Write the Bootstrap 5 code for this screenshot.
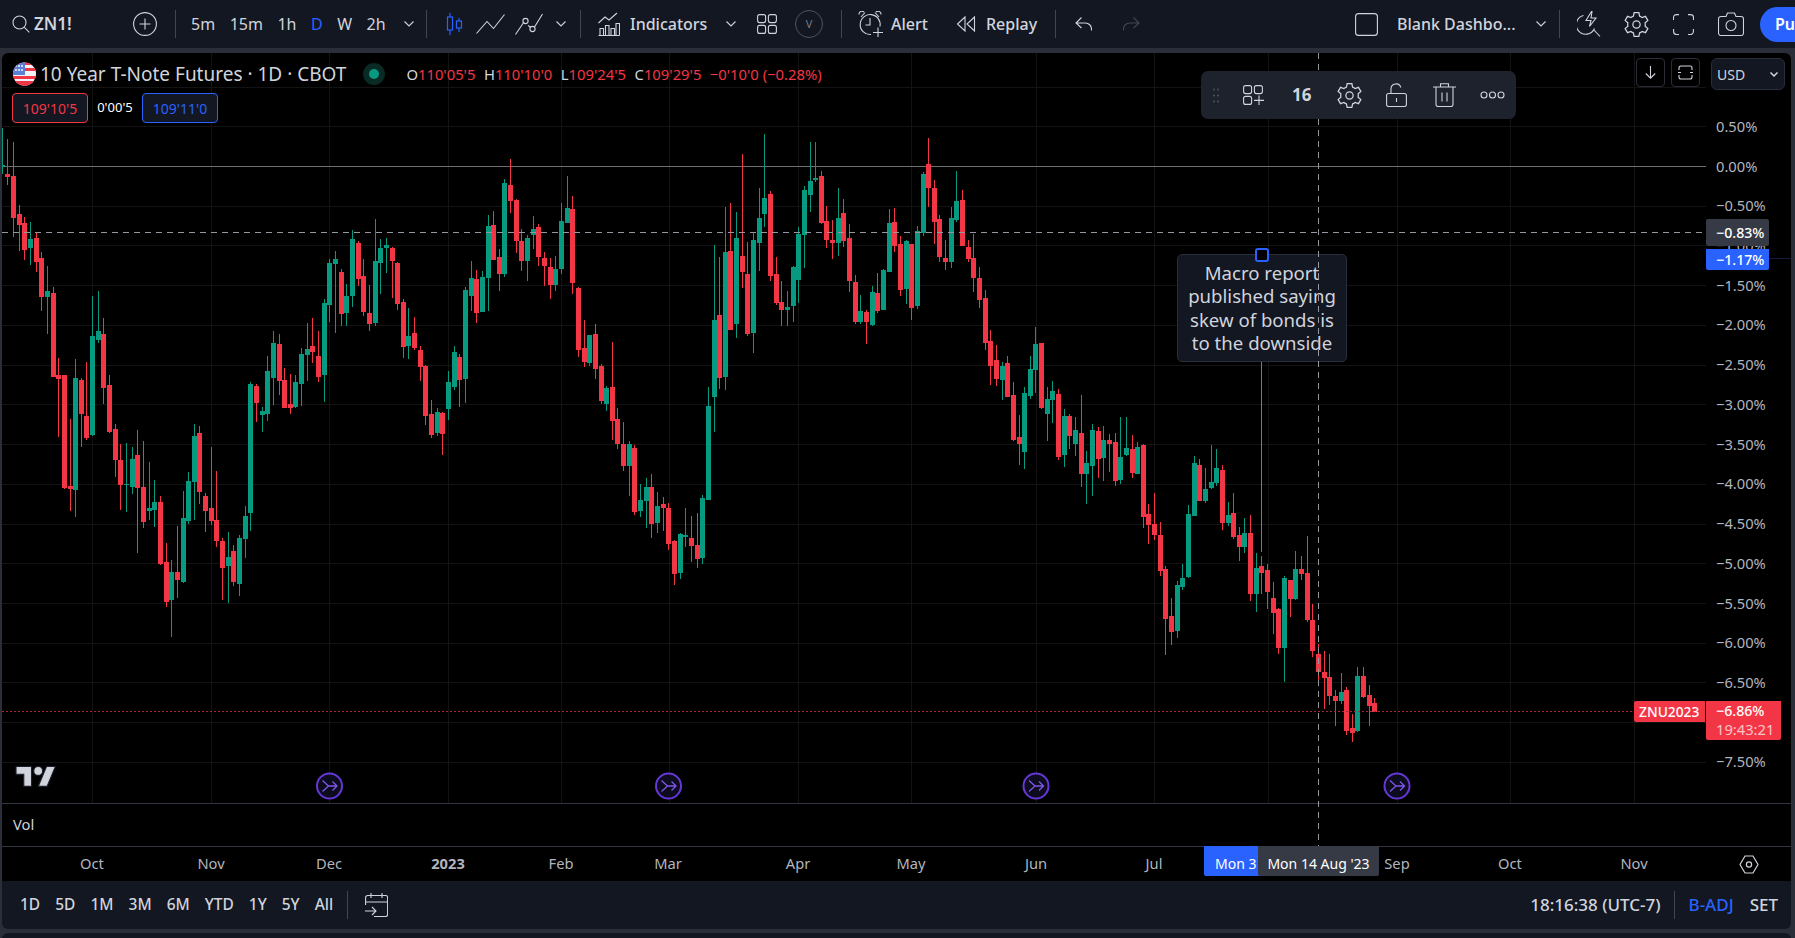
<!DOCTYPE html>
<html lang="en"><head><meta charset="utf-8"><title>ZN1! chart</title>
<link href="https://cdn.jsdelivr.net/npm/bootstrap@5.3.0/dist/css/bootstrap.min.css" rel="stylesheet">
<style>
html,body{height:100%;}
body{background:#2a2e39;color:#d1d4dc;font-family:"Noto Sans","Open Sans",sans-serif;overflow:hidden;width:1795px;height:938px;font-size:16px;}
svg{display:block;flex:none;}
.topstrip{height:48px;background:#131722;white-space:nowrap;}
.ic{fill:none;stroke:#d1d4dc;stroke-width:1.1;}
.grp-search{width:133px;padding-left:12px;font-weight:600;font-size:17px;}
.grp-tf{width:223px;}
.tf-gap{gap:14.500px;}
.vsep{width:1px;height:28px;background:#434651;flex:none;}
.acc{color:#2962ff;}
.t76{width:76px}.t38{width:38px}.t51{width:51px}.t116{width:116px}
.ml-8{margin-left:8px}.ml-10{margin-left:10px}.ml-12{margin-left:12px}.ml-13{margin-left:13px}.ml-14{margin-left:14px}.ml-15{margin-left:15px}.ml-16{margin-left:16px}.ml-17{margin-left:17px}.ml-18{margin-left:18px}.ml-19{margin-left:19px}.ml-20{margin-left:20px}.ml-21{margin-left:21px}.ml-23{margin-left:23px}.ml-24{margin-left:24px}.ml-25{margin-left:25px}.ml-26{margin-left:26px}.ml-27{margin-left:27px}.ml-28{margin-left:28px}.ml-31{margin-left:31px}
.publish{width:86px;height:35px;margin-right:-51px;background:#2962ff;color:#fff;border:0;border-radius:18px 0 0 18px;font-weight:600;padding:0 0 0 15px;text-align:left;font-size:16px;}
.chartpanel{margin:5px 4px 0 2px;height:828px;background:#000;border-radius:6px 6px 0 0;overflow:hidden;position:relative;}
.layer{position:absolute;left:0;top:0;}
.legend-title{font-size:19px;}
.legend-row{position:absolute;left:11px;top:9px;height:24px;}
.pulse{width:22px;height:22px;border-radius:50%;background:#0a2a25;margin-left:17px;margin-right:21px;}
.pulse i{display:block;width:10px;height:10px;border-radius:50%;background:#089981;}
.ohlc{font-size:14.800px;color:#f23645;gap:8.500px;}
.ohlc b{font-weight:400;color:#d1d4dc;}
.bidask{position:absolute;left:10px;top:40px;font-size:14px;}
.pbox{width:76px;height:30px;border:1px solid;border-radius:4px;background:#131722;}
.pbox-sell{color:#f23645;border-color:#f23645;}
.pbox-buy{color:#2962ff;border-color:#2962ff;}
.spread{width:54px;font-size:13px;color:#fff;}
.floatbar{position:absolute;left:1199px;top:18px;width:315px;height:48px;background:#1e222d;border-radius:7px;padding-left:12px;font-weight:700;font-size:17px;}
.axisbtn{position:absolute;top:5px;height:29px;width:29px;border:1px solid #2a2e39;border-radius:4px;padding:0;background:transparent;}
.btnpos1{left:1634px}.btnpos2{left:1669px}
.usd{position:absolute;top:5px;left:1709px;width:74px;height:32px;background:#131722;border:1px solid #2a2e39;border-radius:6px;font-size:14px;color:#d1d4dc;padding:0 6px 0 5px;}
.note{position:absolute;left:1175px;top:201px;width:170px;height:108px;background:#131722;border:1px solid #2a2e39;border-radius:5px;font-size:18.600px;line-height:23.600px;text-align:center;padding-top:5.500px;color:#d1d4dc;white-space:nowrap;}
.knob{position:absolute;left:1253px;top:195px;width:14px;height:14px;border:2px solid #2962ff;border-radius:3px;background:#000;}
.ptag{position:absolute;font-size:14.200px;padding-left:10px;font-weight:500;}
.tag-cross{left:1704px;top:166px;width:63px;height:27px;background:#363a45;color:#fff;border-radius:2px;line-height:27px;}
.tag-blue{left:1704px;top:196px;width:63px;height:21px;line-height:21px;background:#2962ff;color:#fff;border-radius:0 0 2px 2px;}
.tag-sym{left:1632px;top:648px;width:71px;height:21px;line-height:21px;background:#f23645;color:#fff;border-radius:2px 0 0 2px;padding-left:5px;font-size:13.800px;}
.tag-last{left:1704px;top:648px;width:75px;height:39px;background:#f23645;color:#fff;border-radius:0 0 2px 2px;line-height:18px;padding-top:1px;}
.tag-last span{opacity:.7;display:block;font-weight:400;font-size:14.700px;}
.tlabel{position:absolute;top:793px;height:30px;line-height:35px;font-size:14px;border-radius:0 0 2px 2px;color:#fff;white-space:nowrap;overflow:hidden;}
.tl-blue{left:1202px;width:58px;background:#2962ff;padding-left:11px;}
.tl-gray{left:1256px;width:121px;background:#363a45;text-align:center;}
.vollabel{position:absolute;left:11px;top:760px;font-size:14.700px;color:#d1d4dc;}
.rangebar{height:48px;margin:0 4px 0 2px;background:#131722;border-radius:0 0 6px 6px;}
.rng{width:345px;padding-left:18px;gap:15px;font-size:15.500px;font-weight:500;}
.clock{font-size:17px;padding-right:13px;}
.stubpanel{height:20px;margin:4px 4px 0 2px;background:#131722;border-radius:6px 6px 0 0;}
.axt{font-size:14.700px;fill:#b2b5be;font-family:"Noto Sans",sans-serif;}
.axt-b{font-weight:700;fill:#b2b5be;}
</style></head><body>

<div class="topstrip d-flex align-items-center">
  <div class="grp-search d-flex align-items-center gap-1"><svg width="18" height="18" viewBox="0 0 18 18" class="ic"><circle cx="7.5" cy="7.5" r="6.5"/><path d="M12.3 12.3l5 5"/></svg><span>ZN1!</span></div>
  <svg width="24" height="24" viewBox="0 0 24 24" class="ic"><circle cx="12" cy="12" r="11.4"/><path d="M12 6.5v11M6.5 12h11"/></svg>
  <div class="vsep ml-18"></div>
  <div class="grp-tf ml-15 d-flex align-items-center tf-gap"><span>5m</span><span>15m</span><span>1h</span><span class="acc">D</span><span>W</span><span>2h</span>
    <svg class="ic ms-auto" width="10" height="6" viewBox="0 0 10 6"><path d="M.5.5L5 5 9.5.5"/></svg></div>
  <div class="vsep ml-12"></div>
  <svg class="ml-19" width="17" height="24" viewBox="0 0 17 24" fill="none" stroke="#2962ff" stroke-width="1.2"><path d="M4 1v22M13 6v14"/><rect x="1.5" y="5" width="5" height="13" fill="#131722"/><rect x="10.5" y="9" width="5" height="7" fill="#131722"/></svg>
  <svg class="ic ml-13" width="29" height="20" viewBox="0 0 29 20"><path d="M.5 19.5L11 7.5l6.5 7L28.5.5"/></svg>
  <svg class="ic ml-10" width="28" height="22" viewBox="0 0 28 22"><path d="M.5 21.5L9 9M13 12.5l3 2M19.5 14L27.5 1"/><circle cx="10.5" cy="8" r="2.6"/><circle cx="17.5" cy="16" r="2.6"/></svg>
  <svg class="ic ml-13" width="10" height="6" viewBox="0 0 10 6"><path d="M.5.5L5 5 9.5.5"/></svg>
  <div class="vsep ml-14"></div>
  <svg class="ic ml-17" width="22" height="24" viewBox="0 0 22 24"><path d="M.5 11L7 5l4 3 8-7"/><path d="M.5 23.5h21M2 23.5v-7h3.5v7M7.5 23.5v-10H11v10M13 23.5v-7h3.5v7M18 23.5v-12h3.5v12"/></svg>
  <span class="ml-10 t76 fw-medium">Indicators</span>
  <svg class="ic ml-20" width="10" height="6" viewBox="0 0 10 6"><path d="M.5.5L5 5 9.5.5"/></svg>
  <svg class="ic ml-21" width="20" height="20" viewBox="0 0 20 20"><rect x=".6" y=".6" width="8" height="8" rx="2"/><rect x="11.4" y=".6" width="8" height="8" rx="2"/><rect x=".6" y="11.4" width="8" height="8" rx="2"/><rect x="11.4" y="11.4" width="8" height="8" rx="2"/></svg>
  <svg class="ml-18" width="28" height="28" viewBox="0 0 28 28"><circle cx="14" cy="14" r="13.5" fill="none" stroke="#50535e"/><text x="14" y="18" text-anchor="middle" font-size="11" fill="#787b86">V</text></svg>
  <div class="vsep ml-18"></div>
  <svg class="ic ml-16" width="25" height="26" viewBox="0 0 25 26"><path d="M13 23.5a10 10 0 1 1 9-8"/><path d="M12 7v7H7.5M3 6l4-4.5M1 3.5a3 3 0 0 1 5-2.5M21 6l-4-4.5M23 3.5a3 3 0 0 0-5-2.5M15 21.5h10M20 16.5v9.5"/></svg>
  <span class="ml-8 t38 fw-medium">Alert</span>
  <svg class="ic ml-27" width="20" height="16" viewBox="0 0 20 16"><path d="M9 1L1.5 8 9 15zM18.5 1L11 8l7.5 7z"/></svg>
  <span class="ml-10 t51 fw-medium">Replay</span>
  <div class="vsep ml-18"></div>
  <svg class="ic ml-19" width="17" height="14" viewBox="0 0 17 14"><path d="M6.5.5L1 6l5.5 5M1 6h9.5a6 6 0 0 1 6 6v1.5"/></svg>
  <svg class="ml-31" width="17" height="14" viewBox="0 0 17 14" fill="none" stroke="#434651" stroke-width="1.1"><path d="M10.5.5L16 6l-5.5 5M16 6H6.5a6 6 0 0 0-6 6v1.5"/></svg>
  <div class="ms-auto d-flex align-items-center">
    <svg class="ic" width="23" height="23" viewBox="0 0 23 23"><rect x=".6" y=".6" width="21.8" height="21.8" rx="3"/></svg>
    <span class="ml-19 t116 fw-medium text-nowrap">Blank Dashbo...</span>
    <svg class="ic ml-23" width="10" height="6" viewBox="0 0 10 6"><path d="M.5.5L5 5 9.5.5"/></svg>
    <div class="vsep ml-13"></div>
    <svg class="ic ml-17" width="24" height="26" viewBox="0 0 24 26"><path d="M6.5 4.5a9.5 9.5 0 1 0 11 13M17 19l6 6.5"/><path d="M14.5.5L9 9.5h5l-1.500 6L19 7h-5l1-6.500z"/></svg>
    <svg class="ic ml-23" width="25" height="25" viewBox="3 3 22 22"><path d="M16.090 3.500h-4.180l-.6 3.100a7.900 7.900 0 0 0-2.200 1.270L6.100 6.830 4 10.450l2.400 2.080a8 8 0 0 0 0 2.940L4 17.550l2.100 3.620 3-1.040a7.900 7.900 0 0 0 2.200 1.270l.6 3.100h4.190l.6-3.100a7.900 7.900 0 0 0 2.200-1.270l3 1.040 2.100-3.620-2.400-2.080a8 8 0 0 0 0-2.940l2.400-2.080-2.100-3.620-3 1.040a7.900 7.900 0 0 0-2.200-1.270z"/><circle cx="14" cy="14" r="3.200"/></svg>
    <svg class="ic ml-24" width="21" height="21" viewBox="0 0 21 21"><path d="M6 .6H3.500a3 3 0 0 0-3 3V6M15 .6h2.500a3 3 0 0 1 3 3V6M.6 15v2.500a3 3 0 0 0 3 3H6M20.400 15v2.500a3 3 0 0 1-3 3H15"/></svg>
    <svg class="ic ml-24" width="26" height="24" viewBox="0 0 26 24"><path d="M8 4.500l1.500-3.500h7L18 4.500h5a2.500 2.500 0 0 1 2.500 2.500v14a2.500 2.500 0 0 1-2.500 2.500H3A2.500 2.500 0 0 1 .5 21V7A2.500 2.500 0 0 1 3 4.500z"/><circle cx="13" cy="13.500" r="5"/></svg>
    <button type="button" class="btn publish ml-16">Publish</button>
  </div>
</div>

<div class="chartpanel">
  <svg id="cv" class="layer" width="1789" height="828" viewBox="2 53 1789 828" shape-rendering="crispEdges"></svg>
  <div class="note">Macro report<br>published saying<br>skew of bonds is<br>to the downside</div>
  <svg id="ch" class="layer" width="1789" height="828" viewBox="2 53 1789 828" shape-rendering="crispEdges"></svg>
  <div class="knob"></div>

  <div class="legend-row d-flex align-items-center">
    <svg width="23" height="24" viewBox="0 0 23 24"><defs><clipPath id="fl"><circle cx="11.500" cy="12" r="11.500"/></clipPath></defs><g clip-path="url(#fl)"><rect width="23" height="24" fill="#f0f3fa"/><rect y="0" width="23" height="3" fill="#f23645"/><rect y="6" width="23" height="3" fill="#f23645"/><rect y="14" width="23" height="3" fill="#f23645"/><rect y="19" width="23" height="5" fill="#f23645"/><rect width="12" height="13" fill="#5b7fd6"/><g fill="#fff"><circle cx="3" cy="4" r=".9"/><circle cx="6" cy="4" r=".9"/><circle cx="9" cy="4" r=".9"/><circle cx="3" cy="8" r=".9"/><circle cx="6" cy="8" r=".9"/><circle cx="9" cy="8" r=".9"/></g></g></svg>
    <span class="legend-title ms-1 text-nowrap">10 Year T-Note Futures · 1D · CBOT</span>
    <div class="pulse d-flex align-items-center justify-content-center"><i></i></div>
    <div class="ohlc d-flex text-nowrap"><span><b>O</b>110'05'5</span><span><b>H</b>110'10'0</span><span><b>L</b>109'24'5</span><span><b>C</b>109'29'5</span><span>−0'10'0 (−0.28%)</span></div>
  </div>
  <div class="bidask d-flex align-items-center">
    <div class="pbox pbox-sell d-flex align-items-center justify-content-center">109'10'5</div>
    <div class="spread text-center">0'00'5</div>
    <div class="pbox pbox-buy d-flex align-items-center justify-content-center">109'11'0</div>
  </div>

  <div class="floatbar d-flex align-items-center">
    <svg width="6" height="15" viewBox="0 0 6 15" fill="#50535e"><circle cx="1" cy="1.500" r="1"/><circle cx="5" cy="1.500" r="1"/><circle cx="1" cy="7.500" r="1"/><circle cx="5" cy="7.500" r="1"/><circle cx="1" cy="13.500" r="1"/><circle cx="5" cy="13.500" r="1"/></svg>
    <svg class="ic ml-24" width="21" height="20" viewBox="0 0 21 20"><rect x=".6" y=".6" width="8" height="8" rx="2"/><rect x="11.400" y=".6" width="8" height="8" rx="2"/><rect x=".6" y="11.400" width="8" height="8" rx="2"/><path d="M11 15.400h10M16 10.400v9.500"/></svg>
    <span class="ml-28">16</span>
    <svg class="ic ml-26" width="25" height="25" viewBox="3 3 22 22"><path d="M16.090 3.500h-4.180l-.6 3.100a7.900 7.900 0 0 0-2.200 1.270L6.100 6.830 4 10.450l2.400 2.080a8 8 0 0 0 0 2.940L4 17.550l2.100 3.620 3-1.040a7.900 7.900 0 0 0 2.200 1.270l.6 3.100h4.190l.6-3.100a7.900 7.900 0 0 0 2.200-1.270l3 1.040 2.100-3.620-2.400-2.080a8 8 0 0 0 0-2.940l2.400-2.080-2.100-3.620-3 1.040a7.900 7.900 0 0 0-2.200-1.270z"/><circle cx="14" cy="14" r="3.200"/></svg>
    <svg class="ic ml-24" width="21" height="24" viewBox="0 0 21 24"><rect x=".6" y="10.500" width="19.800" height="13" rx="2"/><path d="M5 10.500V6a5 5 0 0 1 9.800-1.500M10.500 15v4"/></svg>
    <svg class="ic ml-26" width="23" height="24" viewBox="0 0 23 24"><path d="M0 4h23M7.500 4V.8h8V4M3 4v17.500a2 2 0 0 0 2 2h13a2 2 0 0 0 2-2V4M9 9.500v9M14 9.500v9"/></svg>
    <svg class="ic ml-24" width="25" height="8" viewBox="0 0 25 8"><circle cx="4" cy="4" r="3"/><circle cx="12.500" cy="4" r="3"/><circle cx="21" cy="4" r="3"/></svg>
  </div>

  <button type="button" class="axisbtn d-flex align-items-center justify-content-center btnpos1"><svg class="ic" width="11" height="13" viewBox="0 0 11 13"><path d="M5.500 0v12M.8 7.500l4.700 4.700 4.700-4.700"/></svg></button>
  <button type="button" class="axisbtn d-flex align-items-center justify-content-center btnpos2"><svg class="ic" width="15" height="15" viewBox="0 0 15 15"><path d="M1 5V3a2 2 0 0 1 2-2h9a2 2 0 0 1 2 2v2M1 10v2a2 2 0 0 0 2 2h9a2 2 0 0 0 2-2v-2M0 7.500h3M12 7.500h3"/></svg></button>
  <div class="usd d-flex align-items-center justify-content-between"><span>USD</span><svg width="8" height="5" viewBox="0 0 8 5" fill="none" stroke="#d1d4dc" stroke-width="1.500"><path d="M.5.5L4 4 7.500.5"/></svg></div>

  <div class="ptag tag-cross">−0.83%</div>
  <div class="ptag tag-blue">−1.17%</div>
  <div class="ptag tag-sym">ZNU2023</div>
  <div class="ptag tag-last">−6.86%<span>19:43:21</span></div>

  <div class="vollabel">Vol</div>
  <div class="tlabel tl-blue">Mon 31</div>
  <div class="tlabel tl-gray">Mon 14 Aug '23</div>
</div>

<div class="rangebar d-flex align-items-center">
  <div class="rng d-flex align-items-center"><span>1D</span><span>5D</span><span>1M</span><span>3M</span><span>6M</span><span>YTD</span><span>1Y</span><span>5Y</span><span>All</span></div>
  <div class="vsep"></div>
  <svg class="ic ml-17" width="23" height="24" viewBox="0 0 23 24"><path d="M.6 12V4.500a2 2 0 0 1 2-2h18a2 2 0 0 1 2 2v17a2 2 0 0 1-2 2H9M.6 9h22M6 0v5M17 0v5M0 18h11M7 14l4 4-4 4"/></svg>
  <div class="ms-auto d-flex align-items-center clock">
    <span class="fw-medium">18:16:38 (UTC-7)</span>
    <div class="vsep ml-13"></div>
    <span class="acc ml-14 fw-medium">B-ADJ</span>
    <span class="ml-16 fw-medium">SET</span>
  </div>
</div>
<div class="stubpanel"></div>

<script>
var NS='http://www.w3.org/2000/svg',cv=document.getElementById('cv'),ch=document.getElementById('ch');
function el(p,n,a,t){var e=document.createElementNS(NS,n);for(var k in a)e.setAttribute(k,a[k]);if(t)e.textContent=t;p.appendChild(e);return e;}
function line(p,x1,y1,x2,y2,c,d){var a={x1:x1,y1:y1,x2:x2,y2:y2,stroke:c};if(d)a['stroke-dasharray']=d;return el(p,'line',a);}
var GRID='#131313',SEP='#33363f';
[92,211,329,448,561,669,798,911,1036,1154,1268,1397,1510,1634].forEach(function(x){line(cv,x+.5,53,x+.5,803,GRID);});
for(var i=-2;i<=15;i++){var y=Math.round(166+i*39.73)+.5;line(cv,2,y,1706,y,GRID);}
line(cv,2,166.5,1706,166.5,'#6f6f6f');
line(cv,1261.5,362,1261.5,552,'#787b86');
var sets=[
{ox:0,oy:120,sy:2.958,d:"7,24,133,138,160,g;22,57,160,169,192,r;40,66,166,290,345,r;58,252,278,311,387,r;73,288,305,385,413,r;91,303,352,379,429,g;109,333,349,420,450,r;124,389,408,524,565,r;142,432,506,524,633,g;160,494,512,760,760,r;175,704,754,766,938,r;193,754,754,1089,1092,r;211,885,1083,1092,1157,r;226,707,763,1095,1175,g;244,763,769,870,967,r;259,716,876,941,947,r;277,521,639,932,935,g;295,506,624,651,660,g;310,586,633,793,840,r;328,754,784,923,926,r;346,899,914,1006,1056,r;361,959,1006,1080,1154,r;379,956,1077,1080,1160,g;397,967,1003,1086,1106,g;412,917,991,1089,1281,r;430,950,1086,1189,1207,r;448,1012,1148,1157,1183,g;463,1065,1130,1154,1204,g;481,1112,1130,1314,1317,r;499,1251,1308,1426,1441,r;514,1302,1337,1420,1530,g;532,1201,1337,1361,1414,r;550,1098,1177,1367,1370,g;565,1041,1068,1186,1195,g;583,899,935,1071,1183,g;598,905,926,1101,1136,r;616,1104,1112,1157,1219,r;634,967,1148,1186,1198,r;649,1038,1183,1246,1263,r;667,1237,1246,1325,1420,r;685,1219,1293,1319,1429,g;700,1257,1275,1367,1379,r;718,1228,1237,1373,1408,g;736,1142,1172,1240,1296,g;751,775,781,1163,1216,g;769,781,787,837,893,r;787,849,861,873,923,g;802,698,743,870,891,g;820,624,660,763,843,g;838,633,663,772,814,r"},
{ox:280,oy:120,sy:3,d:"13,744,780,864,864,r;31,762,852,864,882,r;46,765,786,861,864,g;64,684,702,792,858,g;82,609,687,705,783,g;97,594,678,696,729,r;115,633,708,771,786,r;133,537,549,765,846,g;148,417,429,555,606,g;166,393,417,432,639,g;184,447,456,582,618,r;199,492,528,579,618,g;217,330,357,528,561,g;235,363,369,477,498,r;250,417,468,576,588,r;268,495,579,612,633,r;286,297,423,609,618,g;301,357,384,429,522,g;319,354,375,384,459,g;337,381,384,423,534,r;352,426,429,552,570,r;370,537,546,681,714,r;385,564,648,678,717,g;403,591,639,684,690,r;421,678,690,741,783,r;436,735,738,888,915,r;454,840,882,945,954,r;472,864,876,939,948,g;487,876,879,942,1005,r;505,753,786,867,900,g;523,678,696,801,810,g;538,702,711,780,861,r;556,501,510,777,849,g;574,423,474,528,573,g;589,450,477,579,609,r;607,453,471,576,576,g;625,285,318,474,573,g;640,273,315,420,420,r;658,387,411,462,513,r;673,177,189,462,471,g;691,117,195,243,279,r;709,237,240,363,399,r;724,327,363,423,453,r;742,345,354,423,483,g;760,288,327,345,387,g;775,312,321,411,438,r;793,396,414,438,498,r;811,414,441,495,537,r;826,408,447,495,513,g"},
{ox:560,oy:120,sy:3,d:"4,249,303,447,462,g;22,168,264,309,309,g;37,228,267,489,522,r;55,501,504,690,711,r;73,600,684,726,741,r;88,645,645,729,738,g;106,612,642,747,777,r;124,732,738,843,852,r;139,798,804,852,873,g;157,666,801,903,960,r;172,864,897,972,987,r;190,906,972,1038,1053,r;208,963,972,1038,1128,g;223,975,984,1176,1185,r;241,1092,1140,1173,1191,g;259,1074,1101,1143,1224,g;274,1062,1101,1212,1254,r;292,1116,1158,1209,1239,g;310,1131,1152,1164,1233,r;325,1149,1164,1272,1290,r;343,1260,1263,1362,1395,r;361,1239,1242,1359,1377,g;376,1164,1245,1251,1281,g;394,1188,1254,1278,1326,r;412,1179,1275,1317,1344,r;427,1125,1134,1314,1332,g;445,801,858,1140,1140,g;463,375,600,831,936,g;478,411,585,774,807,r;496,261,396,771,810,g;511,249,393,630,630,r;529,276,354,612,654,g;547,102,408,456,504,r;562,366,462,642,648,r;580,339,360,639,699,g;598,204,294,369,453,g;613,42,234,282,321,g;631,213,222,468,483,r;649,411,462,549,555,r;664,483,546,570,618,r;682,513,561,570,618,g;700,438,441,558,606,g;715,321,342,480,549,g;733,198,210,345,444,g;751,66,183,225,276,g;766,66,174,180,186,g;784,153,168,309,312,r;799,258,303,360,384,r;817,300,360,369,417,r;835,204,294,369,408,g"},
{ox:840,oy:120,sy:3,d:"10,237,279,363,381,r;28,312,354,483,516,r;46,465,486,606,612,r;61,525,573,606,612,g;79,570,576,606,672,r;97,498,516,615,618,g;112,459,519,573,579,r;130,447,450,570,570,g;148,267,309,456,456,g;163,264,306,378,396,r;181,348,372,510,528,r;199,360,363,507,552,g;214,372,372,564,600,r;232,318,333,558,567,g;250,156,162,339,348,g;265,54,132,204,261,r;283,180,204,306,372,r;298,285,297,411,426,r;316,360,414,426,450,r;334,261,294,426,444,g;349,153,243,300,306,g;367,210,240,378,378,r;385,360,381,417,426,r;400,342,414,474,516,r;418,441,474,540,564,r;436,510,534,669,690,r;451,630,663,738,795,r;469,675,720,777,798,r;487,726,738,780,840,g;502,708,729,831,831,r;520,786,825,960,963,r;538,885,951,972,1035,r;553,801,819,996,1047,g;571,708,747,828,837,g;586,621,672,750,819,g;604,669,669,864,867,r;622,801,837,882,963,g;637,783,813,840,909,g;655,807,822,1011,1020,r;673,867,888,1005,1041,g;688,882,888,948,987,r;706,891,930,972,1008,g;724,825,939,1062,1101,r;739,993,1029,1062,1152,g;757,912,930,1038,1128,g;775,921,933,1017,1074,r;790,918,960,1014,1083,g;808,942,960,972,1056,r;826,939,966,1083,1098,r"},
{ox:1120,oy:430,sy:3,d:"1,-40,81,150,162,g;19,-40,54,75,78,g;37,15,57,129,144,r;52,36,51,132,132,g;70,42,45,261,294,r;85,222,252,285,342,r;103,189,282,315,330,r;121,276,315,423,438,r;136,408,417,567,675,r;154,504,558,606,645,r;172,453,465,603,624,g;187,402,444,471,480,g;205,225,252,441,444,g;223,78,99,258,258,g;238,87,105,213,213,r;256,114,177,213,219,g;274,45,156,174,177,g;289,57,114,159,168,g;307,105,120,279,300,r;325,216,255,279,288,g;340,189,249,321,327,r;358,291,315,351,393,r;373,264,309,351,369,g;391,255,309,492,513,r;409,369,414,492,546,g;424,378,408,429,492,r;442,402,420,486,537,r;460,456,504,549,612,r;475,534,537,654,672,r;493,438,444,654,756,g;511,450,450,507,561,r;526,363,417,507,510,g;544,378,417,432,450,r;562,318,429,570,576,r;577,522,570,663,681,r;595,642,672,726,750,r;613,663,726,744,837,r;628,672,741,798,825,r;646,780,798,813,888,r;664,729,786,813,822,g;679,771,780,903,915,r;697,852,894,909,936,r;712,711,738,903,906,g;730,711,738,801,804,r;748,765,795,828,888,r;763,804,819,846,846,r"}];
sets.forEach(function(s){s.d.split(';').forEach(function(r){var p=r.split(','),xc=s.ox+Math.floor(+p[0]/3),
 f=function(v){return Math.round(s.oy+v/s.sy);},hi=f(+p[1]),t=f(+p[2]),b=f(+p[3]),lo=f(+p[4]),c=p[5]=='g'?'#089981':'#f23645';
 if(xc<2)return;
 el(cv,'rect',{x:xc,y:hi,width:1,height:Math.max(1,lo-hi),fill:c});
 el(cv,'rect',{x:Math.max(2,xc-2),y:t,width:xc-2<2?3:5,height:Math.max(1,b-t),fill:c});
});});
line(cv,2,711.5,1706,711.5,'#a32a36','2 2');
line(cv,2,803.5,1791,803.5,SEP);line(cv,2,846.5,1791,846.5,SEP);
line(cv,1769,258.5,1791,258.5,'#131c3d');
for(var i=-1;i<=15;i++){var y=166+i*39.73,lab=i<0?'0.50%':i==0?'0.00%':'−'+(i*0.5).toFixed(2)+'%';if(i==14)continue;el(cv,'text',{x:1716,y:y+5.5,'class':'axt'},lab);}
[['Oct',92],['Nov',211],['Dec',329],['2023',448,1],['Feb',561],['Mar',668],['Apr',798],['May',911],['Jun',1036],['Jul',1154],['Sep',1397],['Oct',1510],['Nov',1634]].forEach(function(a){el(cv,'text',{x:a[1],y:869,'text-anchor':'middle','class':'axt'+(a[2]?' axt-b':'')},a[0]);});
var g=el(cv,'g',{transform:'translate(1740 855)',fill:'none',stroke:'#d1d4dc','stroke-width':1.2,'shape-rendering':'geometricPrecision'});
el(g,'path',{d:'M5 1h8l5 8.500-5 8.500H5l-5-8.500z'});el(g,'circle',{cx:9,cy:9.500,r:2.600});
[329.500,668.500,1036,1397].forEach(function(x){var g=el(cv,'g',{transform:'translate('+x+' 786)',fill:'none','shape-rendering':'geometricPrecision'});
 el(g,'circle',{r:12.500,stroke:'#6637d8','stroke-width':2,fill:'#0d0b1e'});
 el(g,'path',{d:'M-7 -5.500L-1 0-7 5.500M-1 0H7.500M3 -4.500L7.500 0 3 4.500',stroke:'#7e57e8','stroke-width':1.300});});
var l=el(cv,'g',{transform:'translate(16 762) scale(1.11)','shape-rendering':'geometricPrecision'});
el(l,'path',{d:'M14 22H7V11H0V4h14v18zM28 22h-8l7.500-18h8L28 22z',fill:'#d1d4dc',stroke:'#1d2029','stroke-width':1});
el(l,'circle',{cx:20,cy:8,r:4,fill:'#d1d4dc',stroke:'#1d2029','stroke-width':1});
line(ch,1318.500,53,1318.500,846,'#9598a1','6 5');
line(ch,2,232.500,1706,232.500,'#9598a1','6 5');
</script>
<script src="https://cdn.jsdelivr.net/npm/bootstrap@5.3.0/dist/js/bootstrap.bundle.min.js"></script>
</body></html>
